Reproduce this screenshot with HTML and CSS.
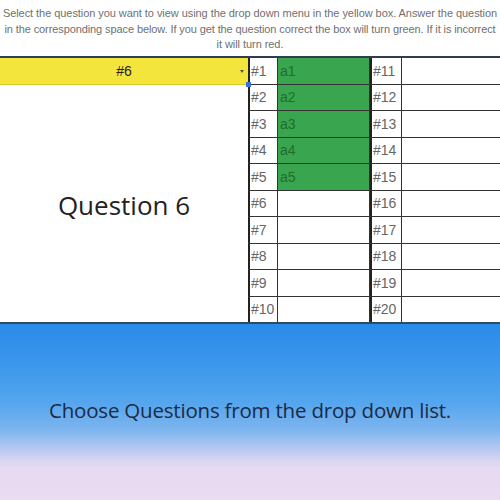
FILE: index.html
```html
<!DOCTYPE html>
<html>
<head>
<meta charset="utf-8">
<link rel="stylesheet" href="styles.css">
</head>
<body>
<div class="page">
  <div class="instructions">
    <div class="line">Select the question you want to view using the drop down menu in the yellow box. Answer the question</div>
    <div class="line">in the corresponding space below. If you get the question correct the box will turn green. If it is incorrect</div>
    <div class="line">it will turn red.</div>
  </div>
  <div class="sheet">
    <div class="left">
      <div class="select">
        <span class="select-value">#6</span>
        <span class="arrow"></span>
        <span class="handle"></span>
      </div>
      <div class="question">Question 6</div>
    </div>
    <div class="grid">
      <div class="row"><div class="c num thick">#1</div><div class="c ans ok">a1</div><div class="c num thick">#11</div><div class="c ans"></div></div>
      <div class="row"><div class="c num thick">#2</div><div class="c ans ok">a2</div><div class="c num thick">#12</div><div class="c ans"></div></div>
      <div class="row"><div class="c num thick">#3</div><div class="c ans ok">a3</div><div class="c num thick">#13</div><div class="c ans"></div></div>
      <div class="row"><div class="c num thick">#4</div><div class="c ans ok">a4</div><div class="c num thick">#14</div><div class="c ans"></div></div>
      <div class="row"><div class="c num thick">#5</div><div class="c ans ok">a5</div><div class="c num thick">#15</div><div class="c ans"></div></div>
      <div class="row"><div class="c num thick">#6</div><div class="c ans"></div><div class="c num thick">#16</div><div class="c ans"></div></div>
      <div class="row"><div class="c num thick">#7</div><div class="c ans"></div><div class="c num thick">#17</div><div class="c ans"></div></div>
      <div class="row"><div class="c num thick">#8</div><div class="c ans"></div><div class="c num thick">#18</div><div class="c ans"></div></div>
      <div class="row"><div class="c num thick">#9</div><div class="c ans"></div><div class="c num thick">#19</div><div class="c ans"></div></div>
      <div class="row"><div class="c num thick">#10</div><div class="c ans"></div><div class="c num thick">#20</div><div class="c ans"></div></div>
    </div>
  </div>
  <div class="banner">
    <div class="banner-text">Choose Questions from the drop down list.</div>
  </div>
</div>
</body>
</html>
```

FILE: styles.css
```css
html, body {
  margin: 0;
  padding: 0;
  width: 500px;
  height: 500px;
  overflow: hidden;
  background: #ffffff;
}
.page {
  width: 500px;
  height: 500px;
  display: flex;
  flex-direction: column;
  font-family: "Liberation Sans", Arial, sans-serif;
}
.instructions {
  height: 56px;
  box-sizing: border-box;
  padding-top: 6px;
  text-align: center;
  color: #707070;
  font-size: 11px;
  line-height: 15.5px;
  letter-spacing: -0.06px;
}
.line {
  white-space: nowrap;
}
.line:nth-child(2) {
  letter-spacing: -0.1px;
}
.sheet {
  height: 264px;
  display: flex;
  border-top: 2px solid #2c3e50;
  border-bottom: 2px solid #2c4a63;
  background: #ffffff;
}
.left {
  width: 248px;
  display: flex;
  flex-direction: column;
}
.select {
  position: relative;
  height: 26px;
  background: #f3e53c;
  border-bottom: 1px solid #d8cb30;
  display: flex;
  align-items: center;
  justify-content: center;
  font-size: 14px;
  color: #222;
}
.arrow {
  position: absolute;
  right: 4px;
  top: 12px;
  width: 0;
  height: 0;
  border-left: 2px solid transparent;
  border-right: 2px solid transparent;
  border-top: 3px solid #555;
}
.handle {
  position: absolute;
  right: -3px;
  bottom: -3px;
  width: 5px;
  height: 5px;
  background: #3a6fd8;
  z-index: 2;
}
.question {
  flex: 1;
  display: flex;
  align-items: center;
  justify-content: center;
  font-family: "Open Sans", sans-serif;
  font-size: 26px;
  color: #222;
  padding-top: 2px;
}
.grid {
  width: 252px;
  display: flex;
  flex-direction: column;
}
.row {
  flex: 1;
  display: grid;
  grid-template-columns: 30px 92px 32px 1fr;
  border-bottom: 1px solid #333;
}
.row:last-child {
  border-bottom: none;
}
.c {
  display: flex;
  align-items: center;
  font-size: 14px;
  color: #666;
  padding-left: 2px;
  border-right: 1px solid #333;
}
.c:last-child {
  border-right: none;
}
.num.thick {
  border-left: 2px solid #222;
  padding-left: 1px;
}
.c.ans {
  color: #1d6e2e;
}
.c.ok {
  background: #3aa54f;
}
.banner {
  flex: 1;
  display: flex;
  align-items: center;
  justify-content: center;
  background: linear-gradient(to bottom, #2a8ae8 0%, #3a97ec 22%, #55a6ee 45%, #7db4ef 60%, #b0c7f1 70%, #d6d4f3 77%, #e6daf2 82%, #eadcf1 100%);
}
.banner-text {
  font-family: "Open Sans", sans-serif;
  font-size: 20.5px;
  color: #1b2a44;
  margin-bottom: 4px;
  letter-spacing: -0.2px;
}
```
